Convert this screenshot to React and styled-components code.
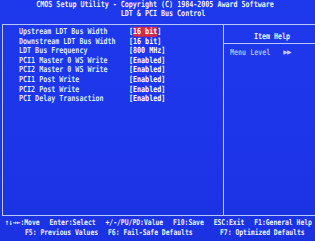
import React from 'react';
import styled, { createGlobalStyle, css } from 'styled-components';

const GlobalStyle = createGlobalStyle`
    html, body {
        margin: 0;
        padding: 0;
        background: #1d34ea;
        overflow: hidden;
    }
`;

// bios glyphs are taller than a normal mono font
const biosText = css`
    font-family: "DejaVu Sans Mono", "Liberation Mono", monospace;
    font-weight: bold;
    font-size: 6.7px;
    white-space: pre;
    transform: scaleY(1.25);
`;

const Screen = styled.div`
    width: 315px;
    height: 241px;
    overflow: hidden;
    background: linear-gradient(180deg, #1e38ec 0%, #1d35e8 60%, #1b32e2 100%);
    display: flex;
    flex-direction: column;
`;

const Title = styled.div`
    width: 326px;
    padding-top: 1px;
    display: flex;
    flex-direction: column;
    align-items: center;
`;

const TitleLine = styled.div`
    ${biosText};
    color: #eef2ff;
    line-height: 9px;
    margin-right: ${p => p.shift || 0}px;
`;

const Frame = styled.div`
    margin-top: 5px;
    margin-left: 2px;
    width: 323px;
    height: 192px;
    flex-shrink: 0;
    border: 1px solid #b8c8ff;
    box-sizing: border-box;
    display: grid;
    grid-template-columns: 220px 1fr;
`;

const Settings = styled.div`
    padding: 3px 0 0 16px;
    display: flex;
    flex-direction: column;
`;

const Row = styled.div`
    display: grid;
    grid-template-columns: 110px auto;
    height: 9.6px;
    line-height: 9.6px;
`;

const Label = styled.span`
    ${biosText};
    display: inline-block;
    color: #dce8ff;
`;

const Value = styled.span`
    ${biosText};
    display: inline-block;
    color: #ffffff;
`;

const Selected = styled.span`
    background: #d42a4a;
    color: #ffffff;
`;

const HelpPanel = styled.div`
    border-left: 1px solid #c0d0ff;
    display: flex;
    flex-direction: column;
`;

const HelpHeader = styled.div`
    height: 19px;
    box-sizing: border-box;
    padding-top: 7px;
    border-bottom: 1px solid #b8c8ff;
    display: flex;
    justify-content: center;
    padding-right: 4px;
`;

const HelpTitle = styled.span`
    ${biosText};
    display: inline-block;
    color: #eef2ff;
    line-height: 10px;
`;

const HelpBody = styled.div`
    padding: 3px 0 0 6px;
    display: flex;
    align-items: center;
    gap: 13px;
`;

const HelpText = styled.span`
    ${biosText};
    display: inline-block;
    color: #a9b6f2;
    line-height: 10px;
`;

const Arrows = styled.span`
    font-family: "DejaVu Sans", sans-serif;
    font-size: 6px;
    letter-spacing: -1px;
    color: #c4ccf6;
    line-height: 10px;
`;

const Footer = styled.div`
    padding-top: 3px;
    display: flex;
    flex-direction: column;
`;

const KeyLine = styled.div`
    display: flex;
    justify-content: ${p => p.spread ? 'space-between' : 'flex-start'};
    padding: 0 ${p => p.right || 0}px 0 ${p => p.left || 0}px;
    height: 9.5px;
    line-height: 9.5px;
`;

const Key = styled.span`
    ${biosText};
    display: inline-block;
    color: #eef2ff;
    font-size: 6.4px;
    width: ${p => p.w ? p.w + 'px' : 'auto'};
`;

const items = [
    { label: 'Upstream LDT Bus Width', value: '16 bit', selected: true },
    { label: 'Downstream LDT Bus Width', value: '16 bit' },
    { label: 'LDT Bus Frequency', value: '800 MHz' },
    { label: 'PCI1 Master 0 WS Write', value: 'Enabled' },
    { label: 'PCI2 Master 0 WS Write', value: 'Enabled' },
    { label: 'PCI1 Post Write', value: 'Enabled' },
    { label: 'PCI2 Post Write', value: 'Enabled' },
    { label: 'PCI Delay Transaction', value: 'Enabled' },
];

const keys = ['↑↓→←:Move', 'Enter:Select', '+/-/PU/PD:Value', 'F10:Save', 'ESC:Exit', 'F1:General Help'];

export default function App() {
    return (
        <Screen>
            <GlobalStyle />
            <Title>
                <TitleLine shift={16}>CMOS Setup Utility - Copyright (C) 1984-2005 Award Software</TitleLine>
                <TitleLine>LDT &amp; PCI Bus Control</TitleLine>
            </Title>
            <Frame>
                <Settings>
                    {items.map(item => (
                        <Row key={item.label}>
                            <Label>{item.label}</Label>
                            <Value>
                                [{item.selected ? <Selected>{item.value}</Selected> : item.value}]
                            </Value>
                        </Row>
                    ))}
                </Settings>
                <HelpPanel>
                    <HelpHeader>
                        <HelpTitle>Item Help</HelpTitle>
                    </HelpHeader>
                    <HelpBody>
                        <HelpText>Menu Level</HelpText>
                        <Arrows>▶▶</Arrows>
                    </HelpBody>
                </HelpPanel>
            </Frame>
            <Footer>
                <KeyLine spread left={5} right={3}>
                    {keys.map(k => <Key key={k}>{k}</Key>)}
                </KeyLine>
                <KeyLine left={25}>
                    <Key w={83}>F5: Previous Values</Key>
                    <Key w={112}>F6: Fail-Safe Defaults</Key>
                    <Key>F7: Optimized Defaults</Key>
                </KeyLine>
            </Footer>
        </Screen>
    );
}
